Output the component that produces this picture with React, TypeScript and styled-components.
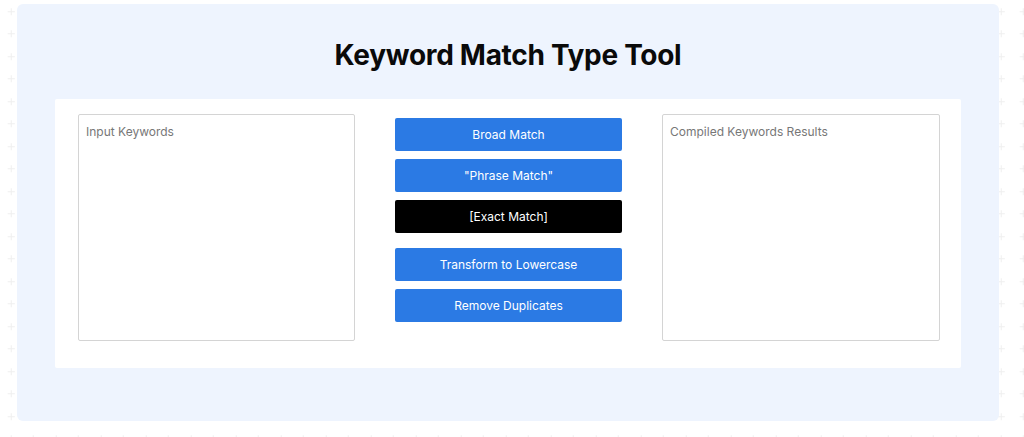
import { useState } from 'react';
import styled, { createGlobalStyle } from 'styled-components';

const plus = encodeURIComponent(
    `<svg xmlns="http://www.w3.org/2000/svg" width="22.5" height="22.5"><path d="M11 8v7M7.5 11.5h7" stroke="#efefef" stroke-width="1"/></svg>`
);

const GlobalStyle = createGlobalStyle`
    body {
        margin: 0;
        font-family: Inter, "Noto Sans", "Liberation Sans", sans-serif;
        background-color: #ffffff;
        background-image: url("data:image/svg+xml,${plus}");
    }
    * { box-sizing: border-box; }
`;

const Page = styled.div`
    padding: 4px 25px 16px 17px;
`;

const Panel = styled.section`
    background: #eef4fe;
    border-radius: 6px;
    padding: 33px 38px 53px;
`;

const Title = styled.h1`
    margin: 0 0 26px;
    text-align: center;
    font-size: 28px;
    line-height: 36px;
    font-weight: 700;
    color: #0a0a0a;
    letter-spacing: -0.3px;
`;

const Workspace = styled.div`
    background: #ffffff;
    border-radius: 2px;
    padding: 15px 22px 27px 23px;
    display: grid;
    grid-template-columns: 277px 227px 278px;
    column-gap: 40px;
    height: 269px;
`;

const KeywordBox = styled.textarea`
    width: 100%;
    height: 227px;
    resize: none;
    border: 1px solid #d4d4d4;
    border-radius: 2px;
    padding: 9px 7px;
    font-family: inherit;
    font-size: 12px;
    line-height: 16px;
    color: #222;
    outline: none;
    &::placeholder {
        color: #777777;
    }
`;

const Actions = styled.div`
    display: flex;
    flex-direction: column;
    gap: 8px;
    padding-top: 4px;
`;

const ActionButton = styled.button<{ $dark?: boolean; $split?: boolean }>`
    height: 33px;
    width: 100%;
    border: none;
    border-radius: 2px;
    margin-top: ${p => (p.$split ? '7px' : '0')};
    background: ${p => (p.$dark ? '#000000' : '#2b7ae4')};
    color: #ffffff;
    font-family: inherit;
    font-size: 12px;
    cursor: pointer;
    &:hover {
        opacity: 0.92;
    }
`;

type Mode = 'broad' | 'phrase' | 'exact';

function App() {
    const [input, setInput] = useState('');
    const [output, setOutput] = useState('');
    const [mode, setMode] = useState<Mode>('exact');

    const lines = () => input.split('\n').map(l => l.trim()).filter(Boolean);

    // wrap every keyword in the chosen match type syntax
    const apply = (m: Mode) => {
        setMode(m);
        const wrap = (k: string) => (m === 'phrase' ? `"${k}"` : m === 'exact' ? `[${k}]` : k);
        setOutput(lines().map(wrap).join('\n'));
    };

    const lower = () => setOutput((output || input).toLowerCase());
    const dedupe = () => setOutput(Array.from(new Set((output || input).split('\n'))).join('\n'));

    return (
        <Page>
            <GlobalStyle />
            <Panel>
                <Title>Keyword Match Type Tool</Title>
                <Workspace>
                    <KeywordBox
                        placeholder="Input Keywords"
                        value={input}
                        onChange={e => setInput(e.target.value)}
                    />
                    <Actions>
                        <ActionButton onClick={() => apply('broad')}>Broad Match</ActionButton>
                        <ActionButton onClick={() => apply('phrase')}>"Phrase Match"</ActionButton>
                        <ActionButton $dark={mode === 'exact'} onClick={() => apply('exact')}>[Exact Match]</ActionButton>
                        <ActionButton $split onClick={lower}>Transform to Lowercase</ActionButton>
                        <ActionButton onClick={dedupe}>Remove Duplicates</ActionButton>
                    </Actions>
                    <KeywordBox placeholder="Compiled Keywords Results" value={output} readOnly />
                </Workspace>
            </Panel>
        </Page>
    );
}

export default App;
